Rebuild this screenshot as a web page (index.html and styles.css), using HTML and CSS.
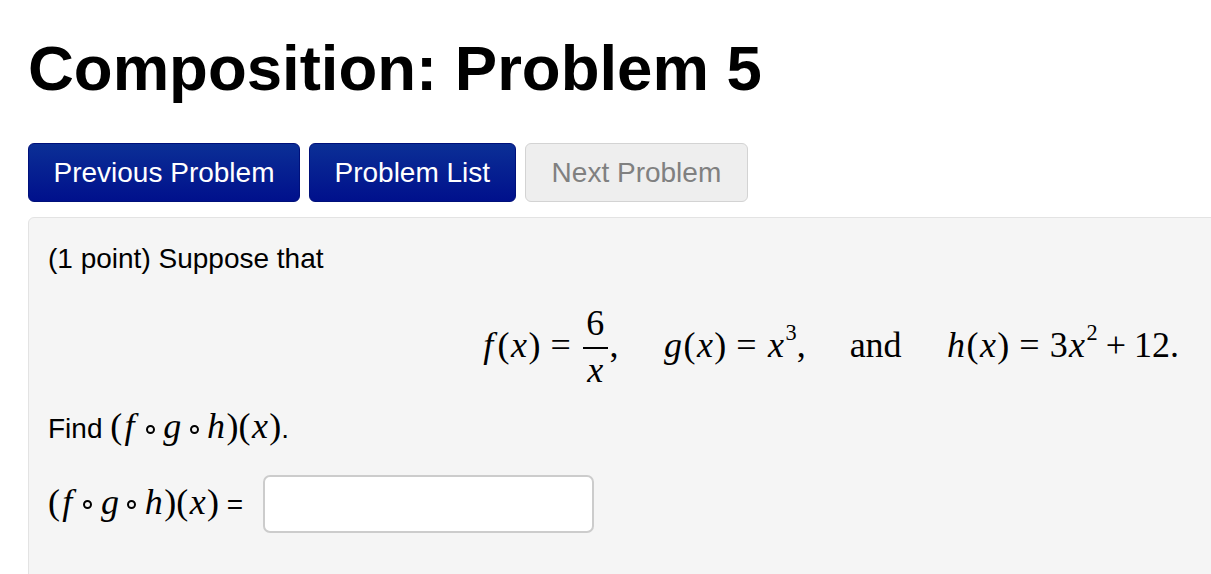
FILE: index.html
```html
<!DOCTYPE html>
<html lang="en">
<head>
<meta charset="utf-8">
<title>Composition: Problem 5</title>
<link rel="stylesheet" href="styles.css">
</head>
<body>
<div class="page">
  <h1 class="title">Composition: Problem 5</h1>
  <div class="nav">
    <a class="btn btn-primary" href="#">Previous Problem</a>
    <a class="btn btn-primary" href="#">Problem List</a>
    <span class="btn btn-disabled">Next Problem</span>
  </div>
  <div class="problem">
    <p class="line">(1 point) Suppose that</p>
    <div class="display">
      <span class="eq"><i class="f">f</i>(<i>x</i>)<span class="rel">=</span><span class="frac"><span class="num">6</span><span class="bar"></span><span class="den"><i>x</i></span></span>,</span>
      <span class="eq"><i>g</i>(<i>x</i>)<span class="rel">=</span><i>x</i><sup>3</sup>,</span>
      <span class="eq">and</span>
      <span class="eq"><i>h</i>(<i>x</i>)<span class="rel">=</span>3<i>x</i><sup>2</sup><span class="bin">+</span>12.</span>
    </div>
    <p class="line">Find <span class="m">(<i class="f">f</i><span class="op"></span><i>g</i><span class="op"></span><i>h</i>)(<i>x</i>)</span>.</p>
    <div class="answer">
      <label class="answer-label" for="ans"><span class="m">(<i class="f">f</i><span class="op"></span><i>g</i><span class="op"></span><i>h</i>)(<i>x</i>)</span> =</label>
      <input class="ans-input" id="ans" type="text">
    </div>
  </div>
</div>
</body>
</html>
```
FILE: styles.css
```css
html, body {
  margin: 0;
  padding: 0;
  background: #fff;
  overflow: hidden;
}
body {
  font-family: "Liberation Sans", Arial, Helvetica, sans-serif;
  color: #000;
}
.page {
  padding-left: 28px;
}
.title {
  margin: 33px 0 0;
  font-size: 63.5px;
  line-height: 70px;
  font-weight: bold;
}
.nav {
  display: flex;
  gap: 9px;
  margin-top: 40px;
}
.btn {
  box-sizing: border-box;
  height: 59px;
  display: flex;
  align-items: center;
  padding: 1px 24.5px 0;
  border: 1px solid;
  border-radius: 6px;
  font-size: 28px;
  text-decoration: none;
}
.btn-primary {
  color: #fff;
  background: linear-gradient(#0b2f96, #00108c);
  border-color: #00107a;
}
.btn-disabled {
  color: #808080;
  background: #eeeeee;
  border-color: #d3d3d3;
  padding-left: 26px;
  padding-right: 26px;
}
.problem {
  margin-top: 15px;
  width: 1564px;
  padding: 21px 19px 80px;
  background: #f5f5f5;
  border: 1px solid #e3e3e3;
  border-radius: 6px;
  font-size: 28px;
  line-height: 40px;
}
.line {
  margin: 0;
}
.display {
  display: flex;
  justify-content: center;
  align-items: baseline;
  gap: 44px;
  margin: 26px 0 20px;
  font-family: "Liberation Serif", "Times New Roman", serif;
  font-size: 36px;
  line-height: 36px;
}
i {
  font-style: italic;
  margin: 0 0.04em;
}
i.f {
  margin: 0 0.12em 0 0.06em;
}
.frac {
  display: inline-flex;
  flex-direction: column;
  align-items: center;
  vertical-align: 21.5px;
  margin: 0 2px;
}
.num, .den {
  line-height: 36px;
  padding: 0 3px;
}
.num {
  margin-bottom: 6px;
}
.bar {
  align-self: stretch;
  height: 1.5px;
  background: #000;
}
.den {
  margin-top: 3.5px;
}
.rel {
  margin: 0 0.2778em;
}
.bin {
  margin: 0 0.2222em;
}
sup {
  font-size: 0.62em;
  line-height: 0;
  vertical-align: 17px;
}
.m {
  font-family: "Liberation Serif", "Times New Roman", serif;
  font-size: 36px;
  line-height: 1;
}
.op {
  display: inline-block;
  box-sizing: border-box;
  width: 9px;
  height: 9px;
  border: 2px solid #000;
  border-radius: 50%;
  vertical-align: 4.5px;
  margin: 0 7px;
}
.answer {
  display: flex;
  align-items: center;
  margin-top: 26px;
}
.answer-label {
  margin-right: 20px;
}
.ans-input {
  box-sizing: border-box;
  width: 331px;
  height: 58px;
  border: 2px solid #cccccc;
  border-radius: 7px;
  background: #fff;
  font-size: 28px;
  padding: 0 10px;
}
```
